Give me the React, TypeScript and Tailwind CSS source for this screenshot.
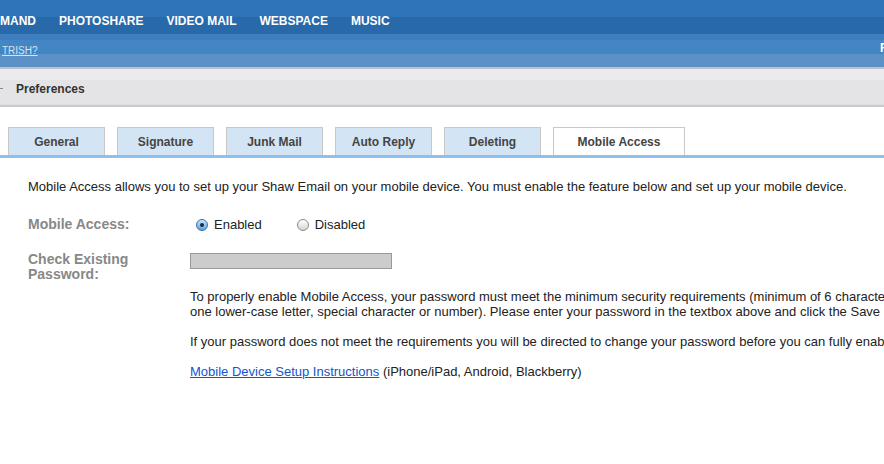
import React from 'react';

const navItems = ['MAND', 'PHOTOSHARE', 'VIDEO MAIL', 'WEBSPACE', 'MUSIC'];
const tabs = [
    { label: 'General', w: 'w-[97px]' },
    { label: 'Signature', w: 'w-[97px]' },
    { label: 'Junk Mail', w: 'w-[97px]' },
    { label: 'Auto Reply', w: 'w-[97px]' },
    { label: 'Deleting', w: 'w-[97px]' },
    { label: 'Mobile Access', w: 'w-[132px]', active: true },
];

function Radio({ checked }: { checked?: boolean }) {
    return checked ? (
        <span className="flex h-[12px] w-[12px] items-center justify-center rounded-full border border-[#3a6ea5] bg-gradient-to-b from-[#cfe6fb] to-[#5aa0e3]">
            <span className="h-[4px] w-[4px] rounded-full bg-[#1a2a3a]" />
        </span>
    ) : (
        <span className="h-[12px] w-[12px] rounded-full border border-[#8a8a8a] bg-gradient-to-b from-[#ffffff] to-[#d6d6d6]" />
    );
}

export default function App() {
    return (
        <div className="h-[464px] w-[884px] overflow-hidden bg-white font-['Liberation_Sans',Arial,sans-serif]">
            {/* main nav */}
            <div className="flex h-[34px] bg-gradient-to-b from-[#2e74b8] from-50% to-[#2869a9] to-50%">
                <div className="flex items-start gap-[23px] pt-[14px] text-[12px] font-bold leading-[14px] text-white">
                    {navItems.map(n => (
                        <span key={n} className="whitespace-nowrap">{n}</span>
                    ))}
                </div>
            </div>

            {/* sub bar */}
            <div className="flex h-[33px] items-start justify-between bg-[linear-gradient(to_bottom,#3f7fc0_6px,#4486c4_6px,#4486c4_20px,#5b91c7_20px)] pl-[2px]">
                <a href="#" className="mt-[11px] text-[10px] leading-[12px] text-[#d4e3f2] underline">TRISH?</a>
                <span className="mt-[7px] w-[4px] overflow-hidden text-[12px] font-bold leading-[14px] text-white">F</span>
            </div>

            {/* breadcrumb bar */}
            <div className="flex flex-col">
                <div className="h-[2px] bg-[#c0c0c6]" />
                <div className="flex h-[35px] items-center bg-gradient-to-b from-[#ebebee] from-30% to-[#e4e4e6] to-30%">
                    <span className="mt-[4px] h-[1px] w-[3px] bg-[#888]" />
                    <span className="ml-[13px] pt-[4px] text-[12px] font-bold text-[#333]">Preferences</span>
                </div>
                <div className="h-[1px] bg-[#dddde0]" />
                <div className="h-[2px] bg-[#cbcbcb]" />
            </div>

            {/* tabs */}
            <div className="mt-[20px] flex h-[28px] items-stretch gap-[12px] pl-[8px]">
                {tabs.map(t => (
                    <div
                        key={t.label}
                        className={`${t.w} flex items-center justify-center border border-b-0 border-[#c8c8c8] text-[12px] font-bold text-[#444] ${t.active ? 'bg-white' : 'bg-[#d3e4f5]'}`}
                    >
                        {t.label}
                    </div>
                ))}
            </div>
            <div className="h-[3px] bg-[#8fbfec]" />

            {/* content */}
            <div className="pl-[28px] pt-[21px] text-[13px] leading-[15px] text-[#222]">
                <p className="whitespace-nowrap">
                    Mobile Access allows you to set up your Shaw Email on your mobile device. You must enable the feature below and set up your mobile device.
                </p>

                <div className="mt-[23px] flex items-center">
                    <div className="w-[162px] text-[14px] font-bold text-[#888]">Mobile Access:</div>
                    <label className="ml-[6px] flex items-center gap-[6px]">
                        <Radio checked />
                        <span>Enabled</span>
                    </label>
                    <label className="ml-[35px] flex items-center gap-[6px]">
                        <Radio />
                        <span>Disabled</span>
                    </label>
                </div>

                <div className="mt-[20px] flex items-start">
                    <div className="w-[162px] text-[14px] font-bold leading-[15px] text-[#888]">
                        Check Existing<br />Password:
                    </div>
                    <div className="mt-[1px] h-[16px] w-[202px] border border-[#999] bg-[#cccccc]" />
                </div>

                <div className="ml-[162px] mt-[7px] whitespace-nowrap">
                    <p>
                        To properly enable Mobile Access, your password must meet the minimum security requirements (minimum of 6 characters, one upper-case letter and
                        <br />
                        one lower-case letter, special character or number). Please enter your password in the textbox above and click the Save button.
                    </p>
                    <p className="mt-[15px]">
                        If your password does not meet the requirements you will be directed to change your password before you can fully enable Mobile Access.
                    </p>
                    <p className="mt-[15px]">
                        <a href="#" className="text-[#1155cc] underline">Mobile Device Setup Instructions</a> (iPhone/iPad, Android, Blackberry)
                    </p>
                </div>
            </div>
        </div>
    );
}
